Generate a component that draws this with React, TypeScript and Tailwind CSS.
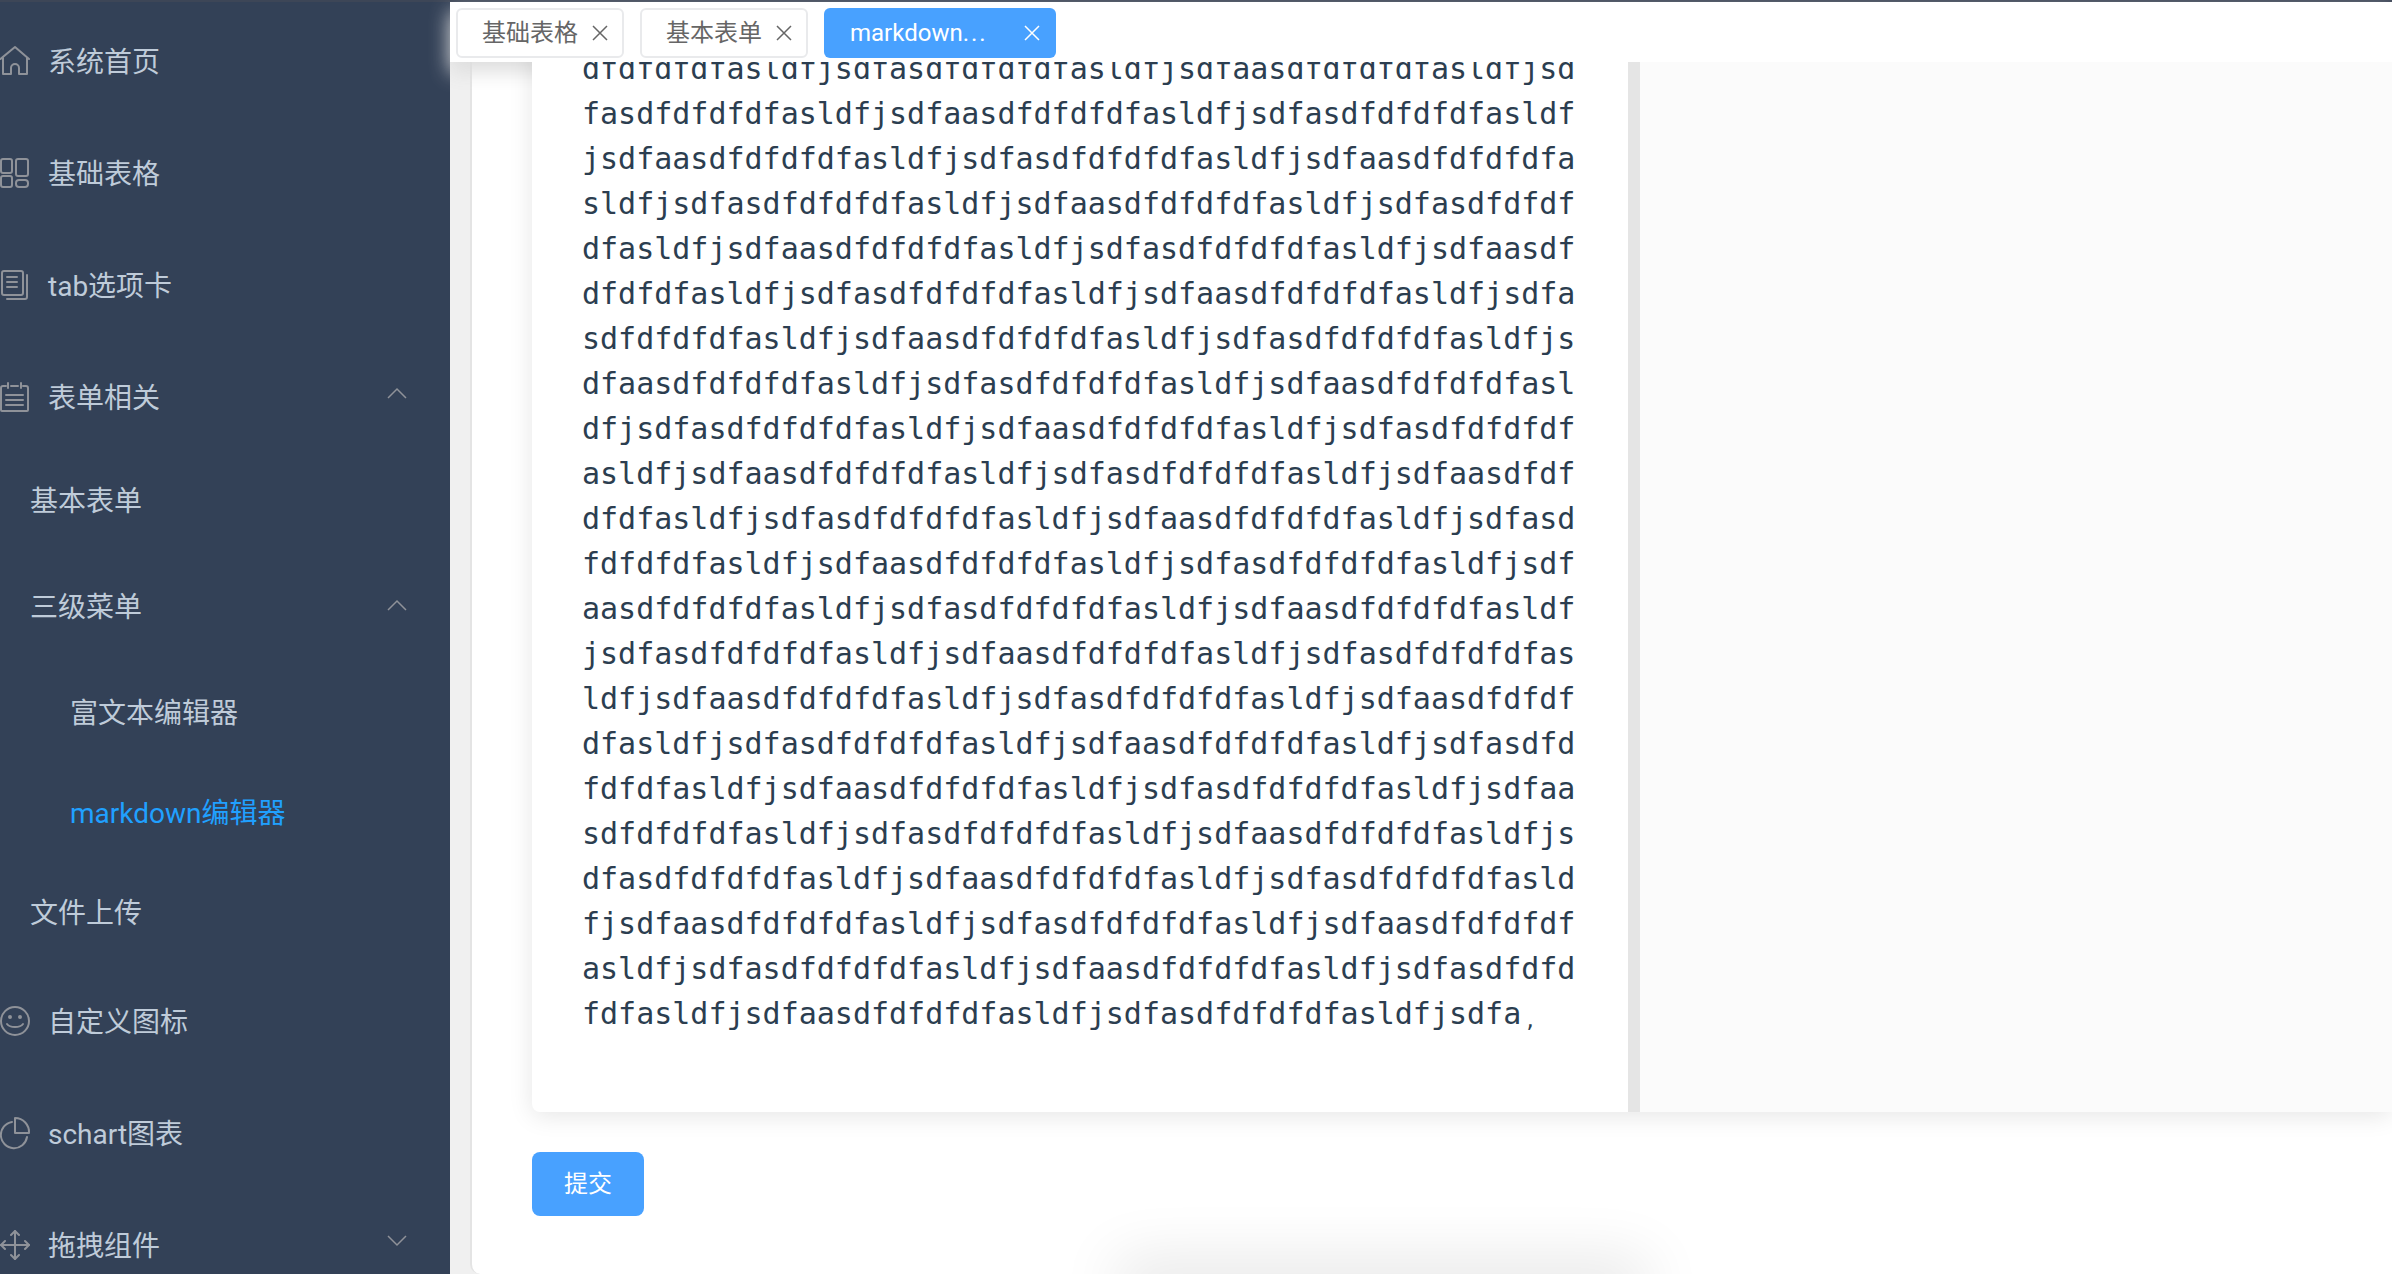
const UNIT_A = "asdfdfdfdfasldfjsdf";
const UNIT_B = "aasdfdfdfdfasldfjsdf";
const editorText = ("dfdfdfdfasldfjsdf" + (UNIT_A + UNIT_B).repeat(32)).slice(0, 1207);

const sansFont = "font-['Roboto','Noto_Sans_CJK_SC',sans-serif]";

function Icon({ children }: { children: React.ReactNode }) {
    return (
        <svg
            width="30"
            height="30"
            viewBox="0 0 30 30"
            fill="none"
            stroke="#8f9299"
            strokeWidth="2"
            strokeLinecap="round"
            strokeLinejoin="round"
            className="mb-[5px] shrink-0 overflow-visible"
        >
            {children}
        </svg>
    );
}

const icons = {
    home: (
        <Icon>
            <path d="M0.5 13 15 1l14 12" />
            <path d="M3 12v16h8v-6a4 4 0 0 1 8 0v6h8V12" />
        </Icon>
    ),
    grid: (
        <Icon>
            <rect x="1" y="1" width="11" height="14" rx="2" />
            <rect x="1" y="18" width="11" height="11" rx="2" />
            <rect x="16" y="1" width="12" height="17" rx="2" />
            <rect x="16" y="22" width="12" height="7" rx="3" />
        </Icon>
    ),
    doc: (
        <Icon>
            <rect x="2" y="1" width="21" height="24" rx="2" />
            <path d="M7 7h10M7 12h10M7 17h10" />
            <path d="M27 5v22a2 2 0 0 1-2 2H7" />
        </Icon>
    ),
    calendar: (
        <Icon>
            <path d="M6 4H3a2 2 0 0 0-2 2v22a1 1 0 0 0 1 1h25a1 1 0 0 0 1-1V6a2 2 0 0 0-2-2h-3" />
            <path d="M8 1v5M21 1v5M11 4h7" />
            <path d="M6 13h17M6 18h17M6 23h17" />
        </Icon>
    ),
    smile: (
        <Icon>
            <circle cx="15" cy="15" r="14" />
            <circle cx="10" cy="11" r="1" fill="#8f9299" />
            <circle cx="20" cy="11" r="1" fill="#8f9299" />
            <path d="M7 18c3 4 13 4 16 0" />
        </Icon>
    ),
    pie: (
        <Icon>
            <path d="M12 4a13.15 13.15 0 1 0 15 15" />
            <path d="M15 0a14 14 0 0 1 14 15H15z" />
        </Icon>
    ),
    move: (
        <Icon>
            <path d="M15 1v28M1 15h28" />
            <path d="M11 5l4-4 4 4M11 25l4 4 4-4M5 11l-4 4 4 4M25 11l4 4-4 4" />
        </Icon>
    ),
};

function Chevron({ up, className }: { up: boolean; className: string }) {
    return (
        <svg width="20" height="12" viewBox="0 0 20 12" fill="none" stroke="#8f9299" strokeWidth="1.5" className={`shrink-0 ${className}`}>
            <path d={up ? "M1 11 10 2l9 9" : "M1 1l9 9 9-9"} />
        </svg>
    );
}

type NavItem = {
    label: string;
    icon?: React.ReactNode;
    chevron?: "up" | "down";
    active?: boolean;
    height: string;
    padding: string;
};

const navItems: NavItem[] = [
    { label: "系统首页", icon: icons.home, height: "h-[112px]", padding: "pl-0" },
    { label: "基础表格", icon: icons.grid, height: "h-[112px]", padding: "pl-0" },
    { label: "tab选项卡", icon: icons.doc, height: "h-[112px]", padding: "pl-0" },
    { label: "表单相关", icon: icons.calendar, chevron: "up", height: "h-[112px]", padding: "pl-0" },
    { label: "基本表单", height: "h-[100px]", padding: "pl-[30px] pb-[7px]" },
    { label: "三级菜单", chevron: "up", height: "h-[112px]", padding: "pl-[30px] pb-[7px]" },
    { label: "富文本编辑器", height: "h-[100px]", padding: "pl-[70px] pb-[7px]" },
    { label: "markdown编辑器", active: true, height: "h-[100px]", padding: "pl-[70px] pb-[7px]" },
    { label: "文件上传", height: "h-[100px]", padding: "pl-[30px] pb-[7px]" },
    { label: "自定义图标", icon: icons.smile, height: "h-[112px]", padding: "pl-0" },
    { label: "schart图表", icon: icons.pie, height: "h-[112px]", padding: "pl-0" },
    { label: "拖拽组件", icon: icons.move, chevron: "down", height: "h-[112px]", padding: "pl-0" },
];

function Sidebar() {
    return (
        <aside className="w-[450px] shrink-0 overflow-hidden bg-[#334157] pt-[5px]">
            {navItems.map((item) => (
                <div key={item.label} className={`flex items-center pr-[43px] ${item.height} ${item.padding}`}>
                    {item.icon}
                    <span className={`text-[28px] ${item.icon ? "ml-[18px]" : ""} ${item.active ? "text-[#20a0ff]" : "text-[#bfcbd9]"}`}>
                        {item.label}
                    </span>
                    {item.chevron && (
                        <span className="ml-auto flex">
                            <Chevron up={item.chevron === "up"} className={item.icon ? "mb-3" : "mb-[5px]"} />
                        </span>
                    )}
                </div>
            ))}
        </aside>
    );
}

function CloseIcon({ color }: { color: string }) {
    return (
        <svg width="16" height="16" viewBox="0 0 16 16" fill="none" stroke={color} strokeWidth="1.5" className="shrink-0">
            <path d="M1 1l14 14M15 1 1 15" />
        </svg>
    );
}

function TagsBar() {
    return (
        <div className="relative z-10 flex h-[60px] shrink-0 items-start gap-4 bg-white pl-[6px] pt-[6px] shadow-[0_10px_20px_#ddd]">
            <div className="flex h-[50px] w-[168px] items-center rounded-md border-2 border-[#e9eaec] pl-6 text-[24px] text-[#666]">
                <span>基础表格</span>
                <span className="ml-[14px] flex">
                    <CloseIcon color="#666" />
                </span>
            </div>
            <div className="flex h-[50px] w-[168px] items-center rounded-md border-2 border-[#e9eaec] pl-6 text-[24px] text-[#666]">
                <span>基本表单</span>
                <span className="ml-[14px] flex">
                    <CloseIcon color="#666" />
                </span>
            </div>
            <div className="flex h-[50px] w-[232px] items-center rounded-md bg-[#48a1ff] pl-[26px] text-[24px] text-white">
                <span className="w-[137px] whitespace-nowrap">
                    markdown<span className="tracking-[2px]">...</span>
                </span>
                <span className="ml-[37px] flex">
                    <CloseIcon color="#fff" />
                </span>
            </div>
        </div>
    );
}

function Editor() {
    return (
        <div className="relative z-20 -mt-[16px] flex shrink-0 rounded-b-lg bg-white shadow-[0_4px_24px_rgba(0,0,0,0.1)]">
            <div className="w-[1096px] shrink-0 pl-[50px] pr-[46px] pb-[76px] font-['DejaVu_Sans_Mono',monospace] text-[30px] leading-[45px] break-all text-[#2c3e50]">
                {editorText}
                <span className="ml-[3px] align-[-3px] text-[20px] leading-none">,</span>
            </div>
            <div className="w-3 shrink-0 bg-[#e5e5e5]" />
            <div className="flex-1 bg-[#fbfbfb]" />
        </div>
    );
}

export default function App() {
    return (
        <div className={`flex h-screen flex-col overflow-hidden bg-[#f0f0f0] ${sansFont}`}>
            <div className="h-[2px] shrink-0 bg-[#3d4657]" />
            <div className="flex min-h-0 flex-1">
                <Sidebar />
                <main className="flex min-w-0 flex-1 flex-col">
                    <TagsBar />
                    <div className="relative ml-5 flex min-h-0 flex-1 flex-col overflow-hidden rounded-bl-[10px] border-l-2 border-[#e4e4e4] bg-white pl-[60px]">
                        <Editor />
                        <button className="mt-10 h-16 w-28 shrink-0 rounded-lg bg-[#48a1ff] text-[24px] text-white">提交</button>
                        <div className="absolute left-[660px] top-full h-5 w-[500px] shadow-[0_0_60px_15px_rgba(0,0,0,0.1)]" />
                    </div>
                </main>
            </div>
        </div>
    );
}
